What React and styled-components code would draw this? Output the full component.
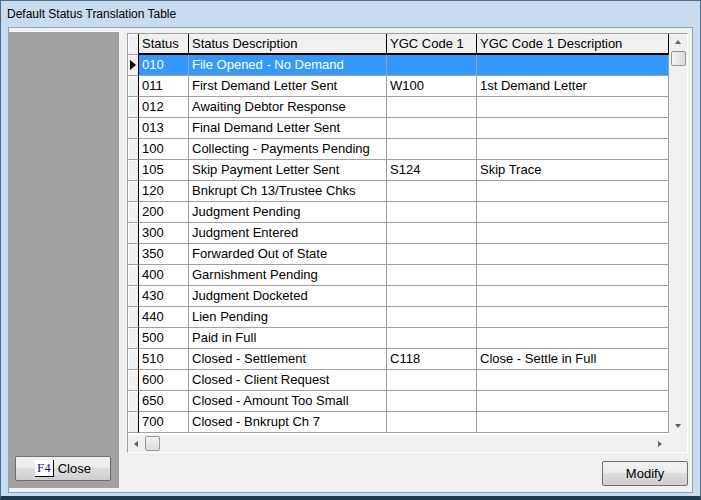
import React from 'react';
import styled, { createGlobalStyle } from 'styled-components';

const rows = [
  ['010', 'File Opened - No Demand', '', ''],
  ['011', 'First Demand Letter Sent', 'W100', '1st Demand Letter'],
  ['012', 'Awaiting Debtor Response', '', ''],
  ['013', 'Final Demand Letter Sent', '', ''],
  ['100', 'Collecting - Payments Pending', '', ''],
  ['105', 'Skip Payment Letter Sent', 'S124', 'Skip Trace'],
  ['120', 'Bnkrupt Ch 13/Trustee Chks', '', ''],
  ['200', 'Judgment Pending', '', ''],
  ['300', 'Judgment Entered', '', ''],
  ['350', 'Forwarded Out of State', '', ''],
  ['400', 'Garnishment Pending', '', ''],
  ['430', 'Judgment Docketed', '', ''],
  ['440', 'Lien Pending', '', ''],
  ['500', 'Paid in Full', '', ''],
  ['510', 'Closed - Settlement', 'C118', 'Close - Settle in Full'],
  ['600', 'Closed - Client Request', '', ''],
  ['650', 'Closed - Amount Too Small', '', ''],
  ['700', 'Closed - Bnkrupt Ch 7', '', ''],
];

const GlobalStyle = createGlobalStyle`
  html, body { margin: 0; padding: 0; }
  body { font-family: "Liberation Sans", Arial, sans-serif; font-size: 12px; }
`;

const Window = styled.div`
  width: 701px;
  height: 500px;
  box-sizing: border-box;
  background: #c9dbee;
  border: 1px solid #4b6a86;
  border-bottom: 4px solid #1e3a4c;
  display: flex;
  flex-direction: column;
`;

const TitleBar = styled.div`
  height: 26px;
  padding-left: 6px;
  display: flex;
  align-items: center;
  font-size: 12px;
  color: #000;
`;

const Client = styled.div`
  flex: 1;
  margin: 0 7px 3px 7px;
  background: #f0f0f0;
  border: 1px solid #8ea4bd;
  display: flex;
  padding: 3px 4px 4px 0;
  gap: 8px;
`;

const SidePanel = styled.div`
  box-sizing: border-box;
  width: 110px;
  flex-shrink: 0;
  background: #a0a0a0;
  border-top: 1px solid #fff;
  display: flex;
  flex-direction: column;
  justify-content: flex-end;
  padding: 0 8px 7px 6px;
`;

const Main = styled.div`
  flex: 1;
  display: flex;
  flex-direction: column;
  padding-top: 2px;
`;

const Grid = styled.div`
  height: 418px;
  border: 1px solid #a0a0a0;
  border-right-color: #fff;
  border-bottom-color: #fff;
  background: #fff;
  display: grid;
  grid-template-columns: 1fr 18px;
  grid-template-rows: 1fr 17px;
`;

const Table = styled.div`
  overflow: hidden;
  background: #fff;
`;

const Row = styled.div`
  display: grid;
  grid-template-columns: 11px 50px 198px 90px 192px;
  height: 21px;
`;

const Cell = styled.div`
  box-sizing: border-box;
  border-right: 1px solid #a0a0a0;
  border-bottom: 1px solid #a0a0a0;
  padding-left: 3px;
  font-size: 13px;
  line-height: 20px;
  white-space: nowrap;
  overflow: hidden;
  background: ${p => (p.$sel ? '#3399ff' : '#fff')};
  color: ${p => (p.$sel ? '#fff' : '#000')};
`;

const HeadCell = styled(Cell)`
  background: #f0f0f0;
  color: #000;
  border-bottom: 2px solid #000;
  border-right: 1px solid #000;
  line-height: 19px;
`;

const Indicator = styled.div`
  box-sizing: border-box;
  background: #f0f0f0;
  border-right: 1px solid #000;
  border-bottom: 1px solid #a0a0a0;
  box-shadow: inset 1px 1px 0 #fff;
  display: flex;
  align-items: center;
  justify-content: center;
`;

const ScrollTrack = styled.div`
  background: #f0f0f0;
  display: flex;
  flex-direction: ${p => (p.$h ? 'row' : 'column')};
  align-items: center;
`;

const Arrow = styled.div`
  width: 17px;
  height: 17px;
  display: flex;
  align-items: center;
  justify-content: center;
  flex-shrink: 0;
`;

const Thumb = styled.div`
  width: 15px;
  height: 15px;
  border: 1px solid #979797;
  border-radius: 2px;
  background: linear-gradient(${p => (p.$h ? '180deg' : '90deg')}, #f3f3f3, #dcdcdc);
  box-sizing: border-box;
`;

const Spacer = styled.div`
  flex: 1;
`;

const Corner = styled.div`
  background: #f0f0f0;
`;

const Footer = styled.div`
  display: flex;
  justify-content: flex-end;
  padding-top: 8px;
`;

const Button = styled.button`
  height: 25px;
  width: ${p => p.$w}px;
  border: 1px solid #707070;
  border-radius: 2px;
  background: linear-gradient(#f2f2f2, #ebebeb 50%, #dddddd 50%, #cfcfcf);
  font-family: "Liberation Sans", Arial, sans-serif;
  font-size: 13px;
  color: #000;
  display: flex;
  align-items: center;
  justify-content: center;
  gap: 4px;
  padding: 0;
`;

const KeyTag = styled.span`
  font-family: "Liberation Serif", serif;
  font-size: 13px;
  color: #1a1a6e;
  border-right: 1px solid #000;
  border-bottom: 1px solid #000;
  background: #fff;
  padding: 0 2px;
  line-height: 16px;
`;

const Tri = ({ d }) => {
  const pts = {
    up: '1,5 4,1 7,5',
    down: '1,1 4,5 7,1',
    left: '5,1 1,4 5,7',
    right: '1,1 5,4 1,7',
  };
  return (
    <svg width="8" height="8" viewBox="0 0 8 8">
      <polygon points={pts[d]} fill="#606060" />
    </svg>
  );
};

export default function App() {
  return (
    <Window>
      <GlobalStyle />
      <TitleBar>Default Status Translation Table</TitleBar>
      <Client>
        <SidePanel>
          <Button $w={96}>
            <KeyTag>F4</KeyTag>Close
          </Button>
        </SidePanel>
        <Main>
          <Grid>
            <Table>
              <Row>
                <Indicator />
                <HeadCell>Status</HeadCell>
                <HeadCell>Status Description</HeadCell>
                <HeadCell>YGC Code 1</HeadCell>
                <HeadCell>YGC Code 1 Description</HeadCell>
              </Row>
              {rows.map((r, i) => (
                <Row key={r[0]}>
                  <Indicator>
                    {i === 0 && (
                      <svg width="6" height="10" viewBox="0 0 6 10">
                        <polygon points="0,0 6,5 0,10" fill="#000" />
                      </svg>
                    )}
                  </Indicator>
                  {r.map((c, j) => (
                    <Cell key={j} $sel={i === 0}>{c}</Cell>
                  ))}
                </Row>
              ))}
            </Table>
            <ScrollTrack>
              <Arrow><Tri d="up" /></Arrow>
              <Thumb />
              <Spacer />
              <Arrow><Tri d="down" /></Arrow>
            </ScrollTrack>
            <ScrollTrack $h>
              <Arrow><Tri d="left" /></Arrow>
              <Thumb $h />
              <Spacer />
              <Arrow><Tri d="right" /></Arrow>
            </ScrollTrack>
            <Corner />
          </Grid>
          <Footer>
            <Button $w={86}>Modify</Button>
          </Footer>
        </Main>
      </Client>
    </Window>
  );
}
